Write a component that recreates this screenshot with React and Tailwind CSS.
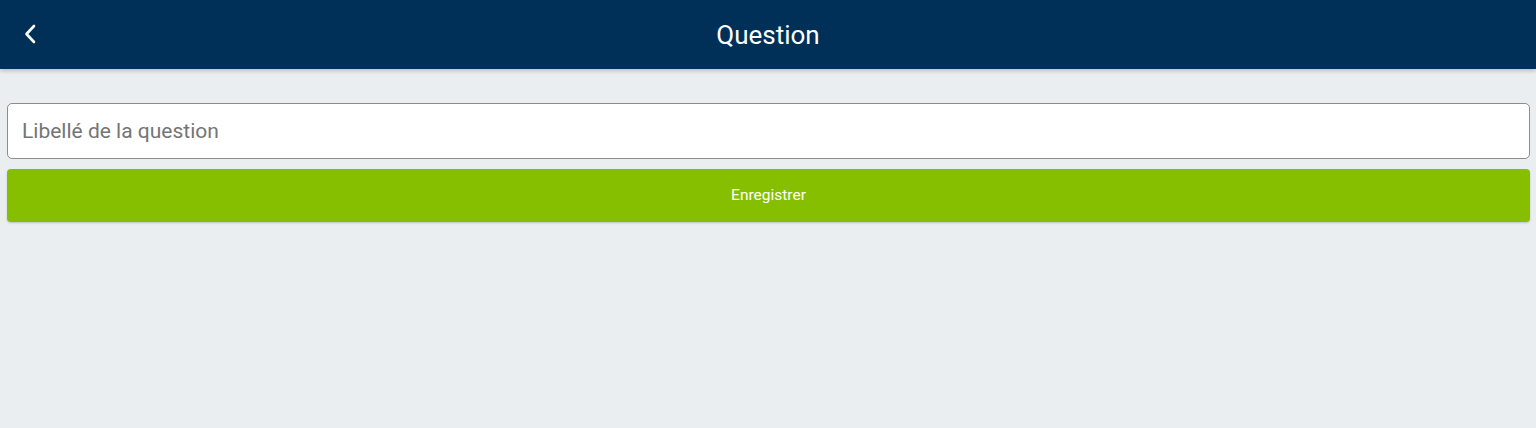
export default function App() {
  return (
    <main className="min-h-[428px] bg-[#eaeef1] font-['Roboto',sans-serif]">
      <header className="relative flex h-[69px] items-center justify-center bg-[#003057] shadow-[0_2px_4px_rgba(0,0,0,0.2)]">
        <button type="button" className="absolute left-[21px] top-[21px] flex h-[26px] w-[18px] items-center justify-center text-white">
          <svg width="14" height="20" viewBox="0 0 14 20" fill="none">
            <path d="M11 2 L3.5 10 L11 18" stroke="currentColor" strokeWidth="2.6" strokeLinecap="round" strokeLinejoin="round" />
          </svg>
        </button>
        <h1 className="text-[26px] font-normal leading-none text-white">Question</h1>
      </header>

      <div className="flex flex-col gap-[10px] pl-[7px] pr-[6px] pt-[34px]">
        <input
          className="h-[56px] w-full rounded-[5px] border border-[#8c8c8c] bg-white px-[14px] text-[21px] text-[#333] outline-none placeholder:text-[#757575]"
          placeholder="Libellé de la question"
        />
        <button
          type="button"
          className="h-[53px] w-full rounded-[4px] bg-[#86bf00] text-[15.5px] font-normal text-white shadow-[0_1px_2px_rgba(0,0,0,0.2)]"
        >
          Enregistrer
        </button>
      </div>
    </main>
  )
}
